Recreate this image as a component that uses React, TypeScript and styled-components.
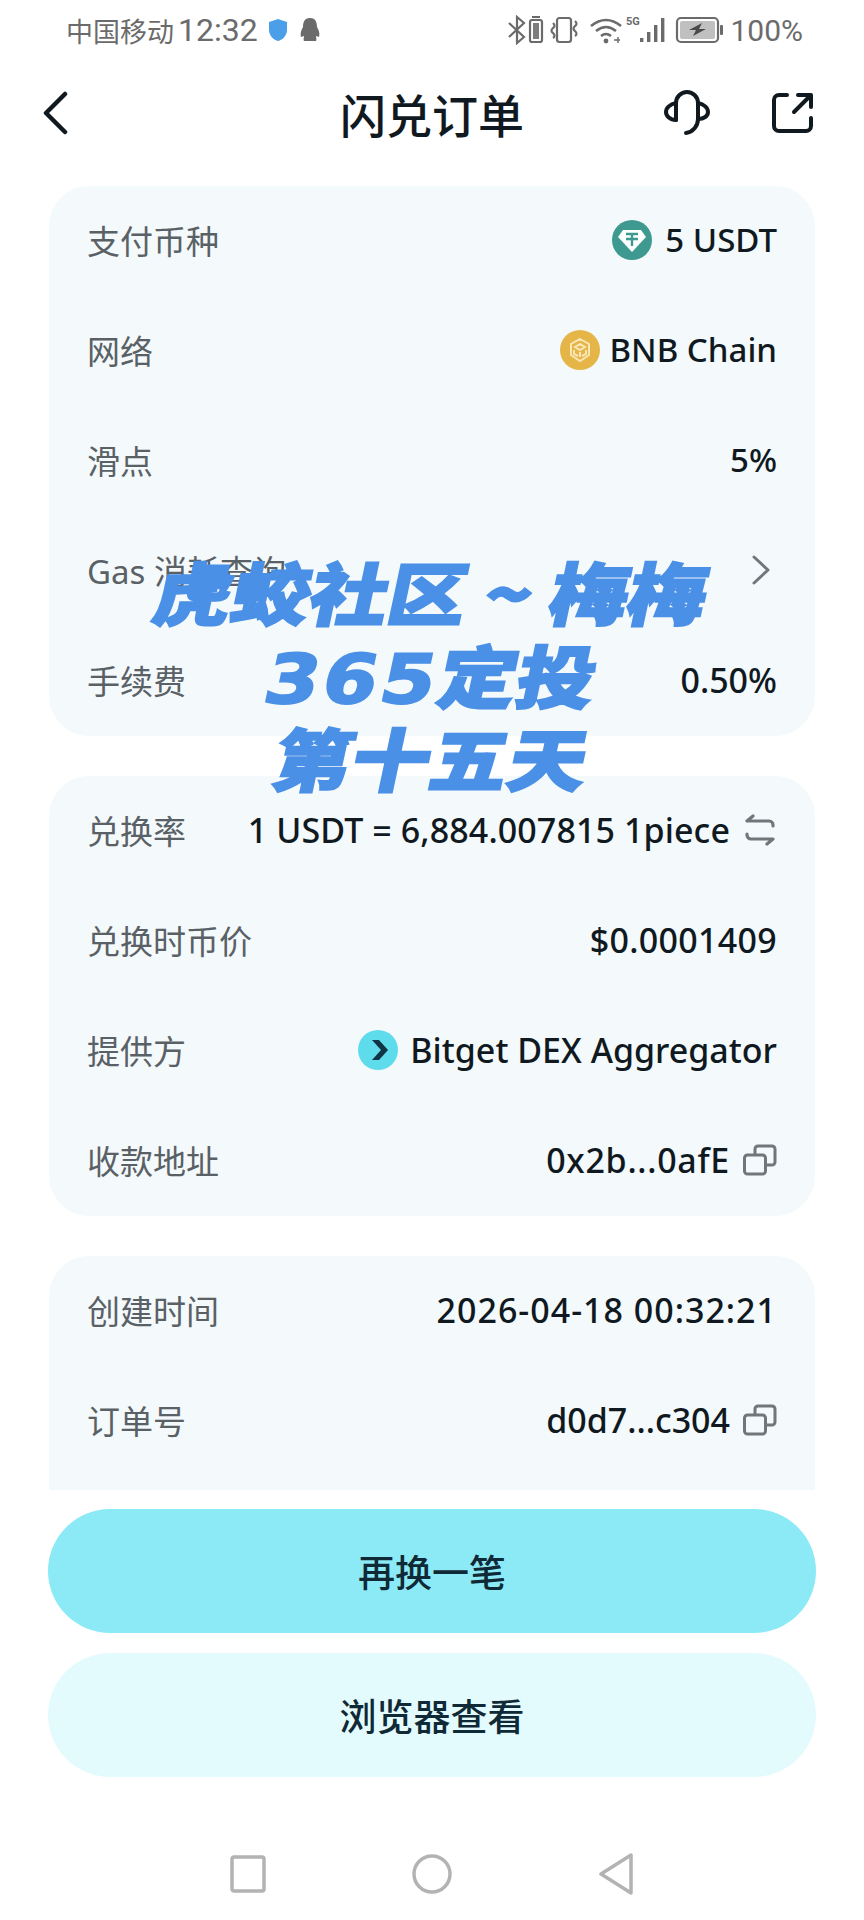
import React from 'react';
import styled, { createGlobalStyle } from 'styled-components';

const GlobalStyle = createGlobalStyle`
    html, body {
        margin: 0;
        padding: 0;
        background: #fff;
    }
    * {
        box-sizing: border-box;
    }
`;

const Page = styled.div`
    position: relative;
    width: 864px;
    height: 1920px;
    overflow: hidden;
    display: flex;
    flex-direction: column;
    background: #fff;
    color: #10191f;
    font-family: "Noto Sans", "Noto Sans CJK SC", sans-serif;
`;

const StatusBar = styled.div`
    height: 60px;
    flex: none;
    padding: 0 61px 0 66px;
    display: flex;
    align-items: center;
    justify-content: space-between;
    color: #6b6b6b;
`;

const StatusGroup = styled.div<{ $gap: number }>`
    display: flex;
    align-items: center;
    gap: ${p => p.$gap}px;
`;

const Carrier = styled.span`
    margin-right: -6px;
    font-family: "Noto Sans CJK SC", sans-serif;
    font-size: 27px;
`;

const StatusText = styled.span<{ $size: number }>`
    font-family: Roboto, sans-serif;
    font-size: ${p => p.$size}px;
`;

const Header = styled.div`
    height: 112px;
    flex: none;
    padding: 0 50px 6px 42px;
    display: grid;
    grid-template-columns: 1fr auto 1fr;
    align-items: center;
`;

const Title = styled.h1`
    margin: 0;
    padding-left: 8px;
    font-family: "Noto Sans CJK SC", sans-serif;
    font-size: 46px;
    font-weight: 500;
`;

const HeaderActions = styled.div`
    display: flex;
    align-items: center;
    justify-content: flex-end;
    gap: 62px;
`;

const Main = styled.div`
    flex: 1;
    min-height: 0;
    overflow: hidden;
    padding: 14px 49px 0;
    display: flex;
    flex-direction: column;
    gap: 40px;
`;

const Card = styled.div`
    flex: none;
    background: #f4f9fb;
    border-radius: 40px;
`;

const Row = styled.div`
    height: 110px;
    padding: 0 38px 3px;
    display: flex;
    align-items: center;
    justify-content: space-between;
`;

const Label = styled.span`
    color: #5a6166;
    font-size: 33px;
`;

const Value = styled.span<{ $size?: number; $spacing?: number; $gap?: number }>`
    display: flex;
    align-items: center;
    gap: ${p => p.$gap || 13}px;
    font-size: ${p => p.$size || 34}px;
    font-weight: 500;
    letter-spacing: ${p => p.$spacing || 0}px;
    white-space: nowrap;
`;

const ChevronSlot = styled.span`
    display: flex;
    margin-right: 7px;
`;

const Footer = styled.div`
    flex: none;
    padding: 19px 48px 143px;
    display: flex;
    flex-direction: column;
    gap: 20px;
`;

const ActionButton = styled.button<{ $primary?: boolean }>`
    height: 124px;
    padding-bottom: 2px;
    border: none;
    border-radius: 62px;
    background: ${p => (p.$primary ? '#8beaf6' : '#e4fbfe')};
    color: #0f2a36;
    font-family: "Noto Sans CJK SC", sans-serif;
    font-size: 37px;
    font-weight: 500;
`;

const NavBar = styled.div`
    position: absolute;
    left: 0;
    right: 0;
    bottom: 25px;
    display: flex;
    justify-content: center;
    align-items: center;
    gap: 146px;
`;

const Watermark = styled.div`
    position: absolute;
    top: 549px;
    left: 0;
    width: 864px;
    text-align: center;
    color: #4a90e6;
    font-family: "Noto Sans CJK SC", sans-serif;
    font-size: 68px;
    font-weight: 900;
    line-height: 83px;
    -webkit-text-stroke: 2px #4a90e6;
`;

const WatermarkLine = styled.div`
    transform: skewX(-12deg) scaleX(1.15);
    white-space: nowrap;
`;

const Digits = styled.span`
    font-family: "DejaVu Sans", sans-serif;
    font-weight: 700;
    letter-spacing: 3px;
    line-height: 1;
`;

const Back = () => (
    <svg width="26" height="44" viewBox="0 0 26 44" fill="none" stroke="#10191f" strokeWidth="4.5" strokeLinecap="round" strokeLinejoin="round">
        <path d="M23 3 L4 22 L23 41" />
    </svg>
);

const Headset = () => (
    <svg width="46" height="46" viewBox="0 0 46 46" fill="none" stroke="#10191f" strokeWidth="4" strokeLinecap="round" strokeLinejoin="round">
        <path d="M12 30 V13 a11 11 0 0 1 22 0 V29 c0 7 -5 13 -12 14" />
        <path d="M12 13 c-6 1 -10 5 -10 9 s4 8 10 8" />
        <path d="M34 13 c6 1 10 5 10 9 s-4 7 -10 7" />
    </svg>
);

const Share = () => (
    <svg width="42" height="42" viewBox="0 0 42 42" fill="none" stroke="#10191f" strokeWidth="4" strokeLinecap="round" strokeLinejoin="round">
        <path d="M15 3 H7 a5 5 0 0 0 -5 5 V34 a5 5 0 0 0 5 5 H34 a5 5 0 0 0 5 -5 V26" />
        <path d="M22 20 L38 4 M26 3 H39 V15" />
    </svg>
);

const Usdt = () => (
    <svg width="40" height="40" viewBox="0 0 40 40">
        <circle cx="20" cy="20" r="20" fill="#3e9a90" />
        <path d="M11 10 H29 L34 17 L20 32 L6 17 Z" fill="#fff" strokeLinejoin="round" />
        <path d="M14 14 H26 M20 14 V26 M14 19 H26" stroke="#3e9a90" strokeWidth="2.4" fill="none" />
    </svg>
);

const Bnb = () => (
    <svg width="40" height="40" viewBox="0 0 40 40">
        <circle cx="20" cy="20" r="20" fill="#e6b548" />
        <path d="M20 9 L29 14 V25 L20 31 L11 25 V14 Z M20 14 L15 17 L20 20 L25 17 Z M20 22 V27 M14 20 V24 L18 26 M26 20 V24 L22 26" fill="none" stroke="#f8e6b4" strokeWidth="2" />
    </svg>
);

const Bitget = () => (
    <svg width="40" height="40" viewBox="0 0 40 40">
        <circle cx="20" cy="20" r="20" fill="#5fdcec" />
        <path d="M14 10 H21 L30 20 L21 30 H14 L23 20 Z" fill="#0f3446" />
    </svg>
);

const Chevron = () => (
    <svg width="18" height="30" viewBox="0 0 18 30" fill="none" stroke="#70767a" strokeWidth="3" strokeLinecap="round" strokeLinejoin="round">
        <path d="M2 2 L16 15 L2 28" />
    </svg>
);

const Swap = () => (
    <svg width="34" height="32" viewBox="0 0 34 32" fill="none" stroke="#70767a" strokeWidth="3.2" strokeLinecap="round" strokeLinejoin="round">
        <path d="M10 2 L4 7 H26 a4 4 0 0 1 4 4 V12" />
        <path d="M24 30 L30 25 H8 a4 4 0 0 1 -4 -4 V20" />
    </svg>
);

const Copy = () => (
    <svg width="34" height="32" viewBox="0 0 34 32" fill="none" stroke="#70767a" strokeWidth="3" strokeLinejoin="round">
        <rect x="1.5" y="11" width="21" height="19" rx="3" />
        <path d="M12 11 V5 a3 3 0 0 1 3 -3 H29 a3 3 0 0 1 3 3 V18 a3 3 0 0 1 -3 3 H23" />
    </svg>
);

const Shield = () => (
    <svg width="20" height="26" viewBox="0 0 20 24">
        <path d="M10 1 L19 4 V12 C19 18 14 22 10 23 C6 22 1 18 1 12 V4 Z" fill="#4a9fe8" />
    </svg>
);

const Penguin = () => (
    <svg width="24" height="28" viewBox="0 0 24 26">
        <path d="M12 1 C6 1 5 6 5 10 C3 13 2 17 3 20 L6 19 C6 21 5 23 6 24 H18 C19 23 18 21 18 19 L21 20 C22 17 21 13 19 10 C19 6 18 1 12 1 Z" fill="#6b6b6b" />
    </svg>
);

const StatusIcons = () => (
    <svg width="215" height="30" viewBox="0 0 215 30" fill="none" stroke="#6b6b6b" strokeWidth="2.2">
        <path d="M1 8 L16 22 L9 28 V2 L16 8 L1 22" />
        <rect x="22" y="5" width="12" height="22" rx="2" />
        <rect x="25" y="8" width="6" height="16" fill="#7d7d7d" stroke="none" />
        <rect x="24" y="1" width="8" height="2" fill="#6b6b6b" stroke="none" />
        <rect x="49" y="3" width="14" height="24" rx="2.5" />
        <path d="M45 8 q3 3 0 5 q-3 3 0 5 q3 3 0 5 M67 6 q3 3 0 5 q-3 3 0 5 q3 3 0 5" />
        <path d="M83 11 q15 -12 30 0 M88 16 q10 -8 20 0 M93 21 q5 -4 10 0" strokeWidth="2.6" />
        <circle cx="98" cy="26" r="2.4" fill="#6b6b6b" stroke="none" />
        <path d="M106 25 h6 M110 22 v6" strokeWidth="1.4" />
        <text x="118" y="10" fontSize="11" fontWeight="700" fontFamily="Roboto, sans-serif" fill="#6b6b6b" stroke="none">5G</text>
        <g stroke="none" fill="#6b6b6b">
            <rect x="132" y="23" width="3.4" height="4" />
            <rect x="139" y="17" width="3.4" height="10" />
            <rect x="146" y="10" width="3.4" height="17" />
            <rect x="153" y="3" width="3.4" height="24" />
        </g>
        <rect x="169" y="3" width="41" height="24" rx="4" />
        <rect x="172" y="6" width="35" height="18" rx="2" fill="#c0c0c0" stroke="none" />
        <path d="M194 8 L181 15 H188 L185 21 L198 14 H191 Z" fill="#4a4a4a" stroke="none" />
        <rect x="212" y="10" width="3" height="10" rx="1" fill="#6b6b6b" stroke="none" />
    </svg>
);

const Square = () => (
    <svg width="36" height="38" viewBox="0 0 36 38" fill="none" stroke="#b3b3b3" strokeWidth="3.5" strokeLinejoin="round">
        <rect x="2" y="2" width="32" height="34" rx="2" />
    </svg>
);

const Circle = () => (
    <svg width="40" height="40" viewBox="0 0 40 40" fill="none" stroke="#b3b3b3" strokeWidth="3.5">
        <circle cx="20" cy="20" r="18" />
    </svg>
);

const Triangle = () => (
    <svg width="36" height="42" viewBox="0 0 36 42" fill="none" stroke="#b3b3b3" strokeWidth="3.5" strokeLinejoin="round">
        <path d="M33 2 V40 L3 21 Z" />
    </svg>
);

const App = () => {
    return (
        <Page>
            <GlobalStyle />
            <StatusBar>
                <StatusGroup $gap={10}>
                    <Carrier>中国移动</Carrier>
                    <StatusText $size={32}>12:32</StatusText>
                    <Shield />
                    <Penguin />
                </StatusGroup>
                <StatusGroup $gap={7}>
                    <StatusIcons />
                    <StatusText $size={30}>100%</StatusText>
                </StatusGroup>
            </StatusBar>
            <Header>
                <Back />
                <Title>闪兑订单</Title>
                <HeaderActions>
                    <Headset />
                    <Share />
                </HeaderActions>
            </Header>
            <Main>
                <Card>
                    <Row><Label>支付币种</Label><Value $size={33}><Usdt />5 USDT</Value></Row>
                    <Row><Label>网络</Label><Value $size={33} $gap={10}><Bnb />BNB Chain</Value></Row>
                    <Row><Label>滑点</Label><Value $size={33}>5%</Value></Row>
                    <Row><Label>Gas 消耗查询</Label><ChevronSlot><Chevron /></ChevronSlot></Row>
                    <Row><Label>手续费</Label><Value>0.50%</Value></Row>
                </Card>
                <Card>
                    <Row><Label>兑换率</Label><Value $spacing={0.1}>1 USDT = 6,884.007815 1piece<Swap /></Value></Row>
                    <Row><Label>兑换时币价</Label><Value $spacing={0.3}>$0.0001409</Value></Row>
                    <Row><Label>提供方</Label><Value $gap={12}><Bitget />Bitget DEX Aggregator</Value></Row>
                    <Row><Label>收款地址</Label><Value $spacing={0.7}>0x2b...0afE<Copy /></Value></Row>
                </Card>
                <Card>
                    <Row><Label>创建时间</Label><Value $spacing={1}>2026-04-18 00:32:21</Value></Row>
                    <Row><Label>订单号</Label><Value>d0d7...c304<Copy /></Value></Row>
                    <Row />
                </Card>
            </Main>
            <Footer>
                <ActionButton $primary>再换一笔</ActionButton>
                <ActionButton>浏览器查看</ActionButton>
            </Footer>
            <NavBar>
                <Square />
                <Circle />
                <Triangle />
            </NavBar>
            <Watermark>
                <WatermarkLine>虎蛟社区 ~ 梅梅</WatermarkLine>
                <WatermarkLine><Digits>365</Digits>定投</WatermarkLine>
                <WatermarkLine>第十五天</WatermarkLine>
            </Watermark>
        </Page>
    );
};

export default App;
